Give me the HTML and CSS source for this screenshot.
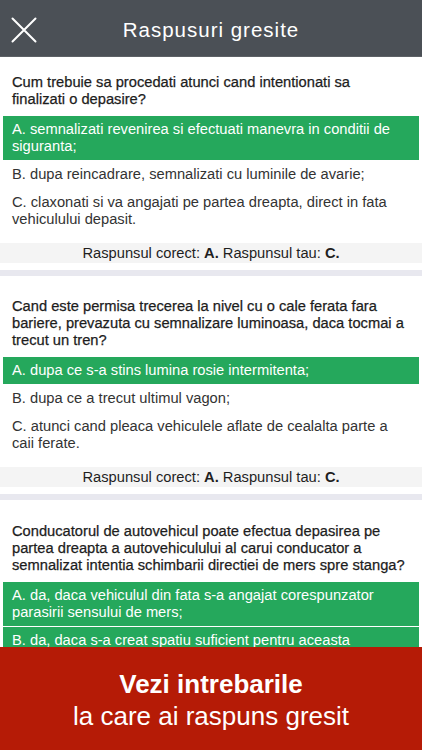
FILE: index.html
```html
<!DOCTYPE html>
<html lang="ro">
<head>
<meta charset="utf-8">
<title>Raspusuri gresite</title>
<link rel="stylesheet" href="styles.css">
</head>
<body>
<div class="screen">
  <header class="topbar">
    <svg class="close" width="26" height="26" viewBox="0 0 26 26" aria-hidden="true">
      <path d="M1.5 1.5 L24.5 24.5 M24.5 1.5 L1.5 24.5" stroke="#fff" stroke-width="2" stroke-linecap="round" fill="none"/>
    </svg>
    <h1 class="title">Raspusuri gresite</h1>
  </header>

  <main class="list">
    <section class="card first">
      <p class="question">Cum trebuie sa procedati atunci cand intentionati sa<br>finalizati o depasire?</p>
      <div class="options">
        <div class="opt correct">A. semnalizati revenirea si efectuati manevra in conditii de siguranta;</div>
        <div class="opt">B. dupa reincadrare, semnalizati cu luminile de avarie;</div>
        <div class="opt">C. claxonati si va angajati pe partea dreapta, direct in fata vehiculului depasit.</div>
      </div>
      <div class="summary">Raspunsul corect: <b>A.</b> Raspunsul tau: <b>C.</b></div>
      <div class="sep"></div>
    </section>

    <section class="card">
      <p class="question">Cand este permisa trecerea la nivel cu o cale ferata fara<br>bariere, prevazuta cu semnalizare luminoasa, daca tocmai a<br>trecut un tren?</p>
      <div class="options">
        <div class="opt correct">A. dupa ce s-a stins lumina rosie intermitenta;</div>
        <div class="opt">B. dupa ce a trecut ultimul vagon;</div>
        <div class="opt">C. atunci cand pleaca vehiculele aflate de cealalta parte a caii ferate.</div>
      </div>
      <div class="summary">Raspunsul corect: <b>A.</b> Raspunsul tau: <b>C.</b></div>
      <div class="sep"></div>
    </section>

    <section class="card">
      <p class="question">Conducatorul de autovehicul poate efectua depasirea pe<br>partea dreapta a autovehiculului al carui conducator a<br>semnalizat intentia schimbarii directiei de mers spre stanga?</p>
      <div class="options">
        <div class="opt correct">A. da, daca vehiculul din fata s-a angajat corespunzator parasirii sensului de mers;</div>
        <div class="opt correct">B. da, daca s-a creat spatiu suficient pentru aceasta manevra;</div>
        <div class="opt">C. nu.</div>
      </div>
    </section>
  </main>

  <div class="banner">
    <div class="banner-strong">Vezi intrebarile</div>
    <div class="banner-light">la care ai raspuns gresit</div>
  </div>
</div>
</body>
</html>
```

FILE: styles.css
```css
html, body {
  margin: 0;
  padding: 0;
  height: 100%;
  overflow: hidden;
  background: #ffffff;
}

body {
  font-family: "Liberation Sans", Arial, sans-serif;
  color: #333333;
}

.screen {
  position: relative;
  width: 422px;
  height: 750px;
  overflow: hidden;
}

.topbar {
  height: 56px;
  background: #4b5056;
  border-bottom: 1px solid #5d6166;
  display: flex;
  align-items: center;
  justify-content: center;
  position: relative;
}

.close {
  position: absolute;
  left: 11px;
  top: 17px;
}

.title {
  margin: 0;
  padding-top: 3px;
  font-size: 20.5px;
  font-weight: normal;
  letter-spacing: 1px;
  color: #ffffff;
}

.list {
  display: flex;
  flex-direction: column;
}

.card {
  padding-top: 22.5px;
}

.card.first {
  padding-top: 16.5px;
}

.question {
  margin: 0 0 8px;
  padding: 0 0 0 12px;
  font-size: 14.7px;
  line-height: 17px;
  white-space: nowrap;
  color: #1d1d1d;
  -webkit-text-stroke: 0.25px #1d1d1d;
}

.options {
  display: flex;
  flex-direction: column;
  gap: 1px;
}

.opt {
  margin: 0 3px;
  padding: 5px 9px;
  font-size: 14.7px;
  line-height: 17px;
  color: #333333;
}

.opt.correct {
  background: #25a85c;
  color: #ffffff;
}

.summary {
  margin-top: 10px;
  height: 20px;
  line-height: 20px;
  background: #f4f4f4;
  text-align: center;
  font-size: 14.7px;
  color: #1f1f1f;
}

.summary b {
  font-weight: bold;
}

.sep {
  margin-top: 7px;
  height: 6px;
  background: #e8e8ef;
}

.banner {
  position: absolute;
  left: 0;
  right: 0;
  bottom: 0;
  height: 103px;
  box-sizing: border-box;
  padding-top: 21px;
  background: #b51b06;
  color: #ffffff;
  text-align: center;
  font-size: 26px;
  line-height: 32px;
}

.banner-strong {
  font-weight: bold;
}

.banner-light {
  font-weight: normal;
}
```
